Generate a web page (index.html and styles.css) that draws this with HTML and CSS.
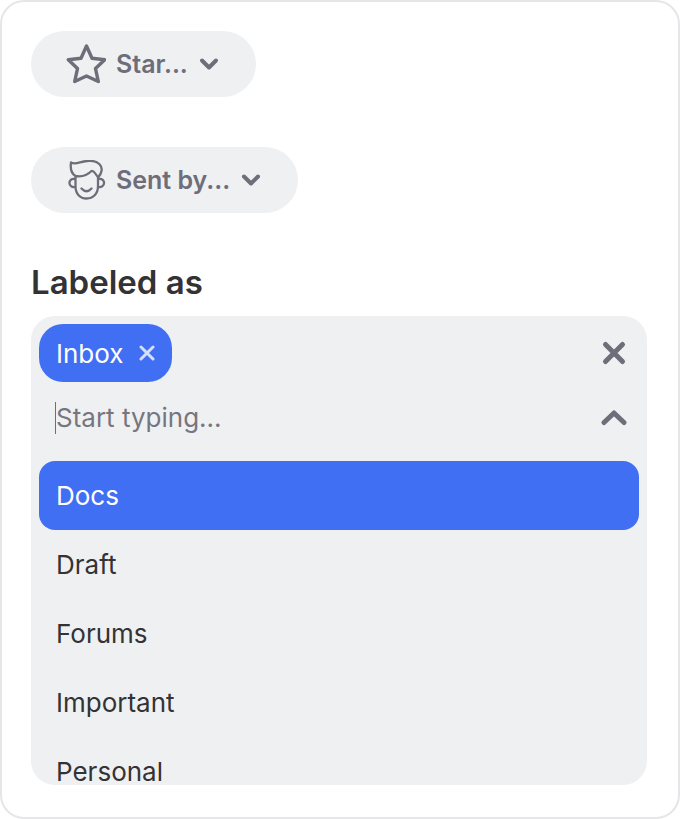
FILE: index.html
```
<!DOCTYPE html>
<html lang="en">
<head>
    <meta charset="UTF-8">
    <meta name="viewport" content="width=device-width, initial-scale=1.0">
    <title>Mail filters</title>
    <link rel="stylesheet" href="styles.css">
</head>
<body>
    <main class="card">
        <button class="pill" type="button">
            <svg class="pill-icon" viewBox="0 0 40 40" aria-hidden="true">
                <path d="M20.500 2 L26 14.200 L38.700 15.800 L29.500 24.600 L32.300 37.500 L20.500 32 L8.700 37.500 L11.500 24.600 L2.300 15.800 L15 14.200 Z" stroke-width="3.400"/>
            </svg>
            <span>Star...</span>
            <svg class="chevron" viewBox="0 0 20 14" aria-hidden="true"><path d="M3 3.500 L10 10.500 L17 3.500"/></svg>
        </button>
        <button class="pill" type="button">
            <svg class="pill-icon" viewBox="0 0 40 40" aria-hidden="true">
                <path d="M5 2.500 C10 5.500 15 0.500 24 0.800 C33 1 36.500 6.500 35.500 11 Q35 14 32.500 17 M5 2.500 C4.500 6 4.500 13 9.500 16 C17 17.500 22 14.500 25.500 11 C28.500 10 29.500 15 32 17 M9.500 16 V26 C9.500 34 14 38.500 20.500 38.500 C27 38.500 32 34 32 26 V17 M9 19 C1.500 17.500 1.500 28.500 9.500 27 M32.500 19 C40 17.500 40 28.500 32 27 M15.500 28.500 Q20.500 34 25.500 28.500" stroke-width="2.300"/>
            </svg>
            <span>Sent by...</span>
            <svg class="chevron" viewBox="0 0 20 14" aria-hidden="true"><path d="M3 3.500 L10 10.500 L17 3.500"/></svg>
        </button>

        <h2><label for="label-input">Labeled as</label></h2>
        <div class="picker">
            <div class="tags">
                <button class="tag" type="button" aria-label="Remove Inbox">
                    <span>Inbox</span>
                    <svg class="tag-x" viewBox="0 0 16 16" aria-hidden="true"><path d="M2 2 L14 14 M14 2 L2 14"/></svg>
                </button>
                <button class="icon-button" type="button" aria-label="Clear all">
                    <svg viewBox="0 0 26 26" aria-hidden="true"><path d="M4.500 4.500 L21.500 21.500 M21.500 4.500 L4.500 21.500"/></svg>
                </button>
            </div>
            <div class="search">
                <input id="label-input" type="text" placeholder="Start typing...">
                <button class="icon-button" type="button" aria-label="Close list">
                    <svg viewBox="0 0 26 26" aria-hidden="true"><path d="M3 17.500 L13 8 L23 17.500"/></svg>
                </button>
            </div>
            <ul class="options" role="listbox" aria-label="Labels">
                <li class="option selected" role="option" aria-selected="true">Docs</li>
                <li class="option" role="option">Draft</li>
                <li class="option" role="option">Forums</li>
                <li class="option" role="option">Important</li>
                <li class="option" role="option">Personal</li>
            </ul>
        </div>
    </main>
</body>
</html>
```

FILE: styles.css
```
* {
    box-sizing: border-box;
}
body {
    margin: 0;
    background-color: white;
    color: #333335;
    font-family: Inter, "Liberation Sans", sans-serif;
    font-size: 26px;
}
button, input {
    font: inherit;
    border: none;
    margin: 0;
}
button {
    cursor: pointer;
}
svg {
    display: block;
    fill: none;
    stroke: currentColor;
    stroke-linecap: round;
    stroke-linejoin: round;
}
.card {
    display: flex;
    flex-direction: column;
    align-items: flex-start;
    min-height: 100vh;
    padding: 29px 31px 32px 29px;
    border: 2px solid #e6e6e8;
    border-radius: 24px;
}
.pill {
    display: flex;
    align-items: center;
    height: 66px;
    margin-bottom: 50px;
    padding: 0 37px 0 35px;
    border-radius: 33px;
    background-color: #eff0f2;
    color: #6e6d7a;
    font-size: 25px;
    font-weight: 600;
}
.pill-icon {
    width: 40px;
    height: 40px;
    margin-right: 10px;
}
.chevron {
    width: 20px;
    height: 14px;
    margin-left: 11px;
    stroke-width: 4;
}
h2 {
    margin: 0 0 14px;
    font-size: 33px;
    line-height: 39px;
    font-weight: 600;
}
.picker {
    align-self: stretch;
    padding: 8px 8px 3px;
    border-radius: 24px;
    background-color: #eff0f2;
}
.tags, .search {
    display: flex;
    align-items: center;
    justify-content: space-between;
    padding-right: 12px;
}
.tag {
    display: flex;
    align-items: center;
    gap: 16px;
    height: 58px;
    padding: 0 17px;
    border-radius: 24px;
    background-color: #416ff4;
    color: white;
}
.tag-x {
    width: 16px;
    height: 16px;
    stroke: #d5dffc;
    stroke-width: 3;
}
.icon-button {
    padding: 0;
    background: none;
    color: #6e6d7a;
}
.icon-button svg {
    width: 26px;
    height: 26px;
    stroke-width: 5;
}
.search {
    height: 79px;
    padding-bottom: 8px;
    padding-left: 16px;
}
.search input {
    flex: 1;
    min-width: 0;
    height: 32px;
    padding: 0;
    /* text cursor */
    border-left: 1px solid #6e6d7a;
    background: none;
    outline: none;
}
.search input::placeholder {
    color: #77767f;
    opacity: 1;
}
.options {
    height: 321px;
    margin: 0;
    padding: 0;
    overflow: hidden;
    list-style: none;
}
.option {
    height: 69px;
    padding: 0 17px;
    border-radius: 16px;
    line-height: 70px;
}
.selected {
    background-color: #416ff4;
    color: white;
}
```
